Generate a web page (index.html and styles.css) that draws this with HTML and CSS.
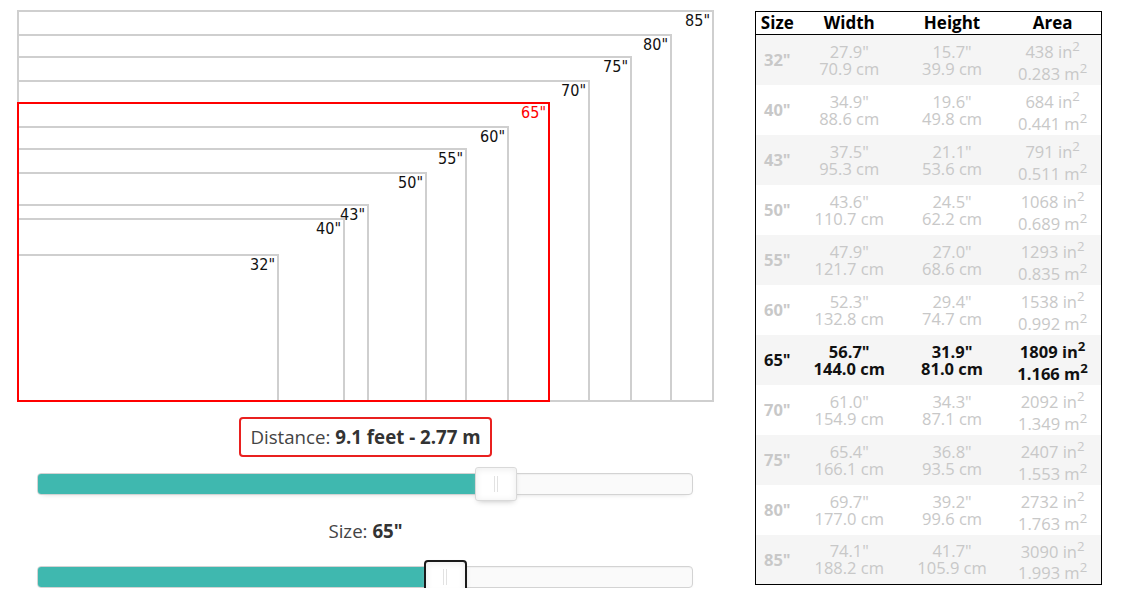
FILE: index.html
```html
<!DOCTYPE html>
<html>
<head>
<meta charset="utf-8">
<link rel="stylesheet" href="styles.css">
</head>
<body>
<div class="page">
  <div class="left">
    <div class="diagram">
      <div class="rect" style="width:697px;height:392px"><div class="lbl">85"</div></div>
      <div class="rect" style="width:655px;height:368px"><div class="lbl">80"</div></div>
      <div class="rect" style="width:615px;height:346px"><div class="lbl">75"</div></div>
      <div class="rect" style="width:573px;height:322px"><div class="lbl">70"</div></div>
      <div class="rect" style="width:492px;height:276px"><div class="lbl">60"</div></div>
      <div class="rect" style="width:450px;height:254px"><div class="lbl">55"</div></div>
      <div class="rect" style="width:410px;height:230px"><div class="lbl">50"</div></div>
      <div class="rect" style="width:352px;height:198px"><div class="lbl">43"</div></div>
      <div class="rect" style="width:328px;height:184px"><div class="lbl">40"</div></div>
      <div class="rect" style="width:262px;height:148px"><div class="lbl">32"</div></div>
      <div class="rect active" style="width:533px;height:300px"><div class="lbl">65"</div></div>
    </div>
    <div class="dist-wrap"><span class="dist">Distance: <b>9.1 feet - 2.77 m</b></span></div>
    <div class="slider">
      <div class="connect" style="width:458px"></div>
      <div class="handle" style="left:437px"></div>
    </div>
    <div class="size-label">Size: <b>65"</b></div>
    <div class="slider slider2">
      <div class="connect" style="width:408px"></div>
      <div class="handle focus" style="left:386px"></div>
    </div>
  </div>
  <table class="sizes">
    <colgroup><col class="c1"><col class="c2"><col class="c3"><col class="c4"></colgroup>
    <thead><tr><th>Size</th><th>Width</th><th>Height</th><th>Area</th></tr></thead>
    <tbody>
      <tr><td class="sz">32"</td><td><span>27.9"</span><span>70.9 cm</span></td><td><span>15.7"</span><span>39.9 cm</span></td><td><span>438 in<sup>2</sup></span><span>0.283 m<sup>2</sup></span></td></tr>
      <tr><td class="sz">40"</td><td><span>34.9"</span><span>88.6 cm</span></td><td><span>19.6"</span><span>49.8 cm</span></td><td><span>684 in<sup>2</sup></span><span>0.441 m<sup>2</sup></span></td></tr>
      <tr><td class="sz">43"</td><td><span>37.5"</span><span>95.3 cm</span></td><td><span>21.1"</span><span>53.6 cm</span></td><td><span>791 in<sup>2</sup></span><span>0.511 m<sup>2</sup></span></td></tr>
      <tr><td class="sz">50"</td><td><span>43.6"</span><span>110.7 cm</span></td><td><span>24.5"</span><span>62.2 cm</span></td><td><span>1068 in<sup>2</sup></span><span>0.689 m<sup>2</sup></span></td></tr>
      <tr><td class="sz">55"</td><td><span>47.9"</span><span>121.7 cm</span></td><td><span>27.0"</span><span>68.6 cm</span></td><td><span>1293 in<sup>2</sup></span><span>0.835 m<sup>2</sup></span></td></tr>
      <tr><td class="sz">60"</td><td><span>52.3"</span><span>132.8 cm</span></td><td><span>29.4"</span><span>74.7 cm</span></td><td><span>1538 in<sup>2</sup></span><span>0.992 m<sup>2</sup></span></td></tr>
      <tr class="sel"><td class="sz">65"</td><td><span>56.7"</span><span>144.0 cm</span></td><td><span>31.9"</span><span>81.0 cm</span></td><td><span>1809 in<sup>2</sup></span><span>1.166 m<sup>2</sup></span></td></tr>
      <tr><td class="sz">70"</td><td><span>61.0"</span><span>154.9 cm</span></td><td><span>34.3"</span><span>87.1 cm</span></td><td><span>2092 in<sup>2</sup></span><span>1.349 m<sup>2</sup></span></td></tr>
      <tr><td class="sz">75"</td><td><span>65.4"</span><span>166.1 cm</span></td><td><span>36.8"</span><span>93.5 cm</span></td><td><span>2407 in<sup>2</sup></span><span>1.553 m<sup>2</sup></span></td></tr>
      <tr><td class="sz">80"</td><td><span>69.7"</span><span>177.0 cm</span></td><td><span>39.2"</span><span>99.6 cm</span></td><td><span>2732 in<sup>2</sup></span><span>1.763 m<sup>2</sup></span></td></tr>
      <tr><td class="sz">85"</td><td><span>74.1"</span><span>188.2 cm</span></td><td><span>41.7"</span><span>105.9 cm</span></td><td><span>3090 in<sup>2</sup></span><span>1.993 m<sup>2</sup></span></td></tr>
    </tbody>
  </table>
</div>
</body>
</html>
```
FILE: styles.css
```css
* { box-sizing: border-box; }
html, body { margin: 0; padding: 0; background: #fff; }
body { font-family: "Open Sans", "Noto Sans", sans-serif; color: #444; }

.page {
  display: flex;
  align-items: flex-start;
  gap: 41px;
  padding: 10px 0 0 17px;
}

.left { width: 697px; }

.diagram {
  position: relative;
  width: 697px;
  height: 392px;
}
.rect {
  position: absolute;
  left: 0;
  bottom: 0;
  border: 2px solid #cfcfcf;
}
.rect.active { border-color: #f00; z-index: 1; }
.lbl {
  text-align: right;
  padding-right: 2px;
  font-family: "DejaVu Sans Condensed", "DejaVu Sans", sans-serif;
  font-size: 16px;
  line-height: 18px;
  color: #111;
}
.rect.active .lbl { color: #f00; }

.dist-wrap {
  text-align: center;
  margin-top: 15px;
}
.dist {
  display: inline-block;
  border: 2px solid #e9201f;
  border-radius: 4px;
  padding: 0 9px;
  height: 40px;
  line-height: 36px;
  font-size: 18.7px;
  color: #444;
}
.dist b, .size-label b { color: #333; }

.slider {
  position: relative;
  margin: 16px 21px 0 20px;
  height: 22px;
  background: #fafafa;
  border: 1px solid #d3d3d3;
  border-radius: 4px;
  box-shadow: inset 0 1px 1px #f0f0f0, 0 3px 6px -5px #bbb;
}
.slider2 { margin-top: 23px; }
.connect {
  height: 100%;
  background: #3fb8af;
  border-radius: 3px 0 0 3px;
}
.handle {
  position: absolute;
  top: -7px;
  width: 42px;
  height: 34px;
  background: #fff;
  border: 1px solid #d9d9d9;
  border-radius: 3px;
  box-shadow: inset 0 0 1px #fff, inset 0 1px 7px #ebebeb, 0 3px 6px -3px #bbb;
}
.handle::before, .handle::after {
  content: "";
  position: absolute;
  top: 8px;
  width: 1px;
  height: 16px;
  background: #e2e2e2;
}
.handle::before { left: 18px; }
.handle::after { left: 21px; }
.handle.focus {
  width: 43px;
  border: 2px solid #1a1a1a;
  border-radius: 4px;
}
.handle.focus::before { left: 17px; top: 7px; }
.handle.focus::after { left: 20px; top: 7px; }

.size-label {
  text-align: center;
  margin-top: 24px;
  font-size: 18.7px;
  line-height: 24px;
  color: #444;
}

.sizes {
  margin-top: 1px;
  border-collapse: collapse;
  table-layout: fixed;
  width: 347px;
  border: 1px solid #000;
}
.c1 { width: 43px; }
.c2 { width: 101px; }
.c3 { width: 104px; }
.c4 { width: 97px; }
.sizes th {
  height: 23px;
  padding: 0;
  font-size: 17px;
  line-height: 22px;
  font-weight: 700;
  color: #000;
  text-align: center;
  border-bottom: 1px solid #000;
}
.sizes td {
  height: 50px;
  padding: 0;
  text-align: center;
  vertical-align: middle;
  font-size: 16.5px;
  line-height: 17px;
  color: #c8c8c8;
}
.sizes td span { display: block; }
.sizes td.sz { font-weight: 700; }
.sizes tbody tr:nth-child(odd) { background: #f5f5f5; }
.sizes tr.sel td { color: #111; font-weight: 700; }
.sizes sup { font-size: 0.8em; }
```
